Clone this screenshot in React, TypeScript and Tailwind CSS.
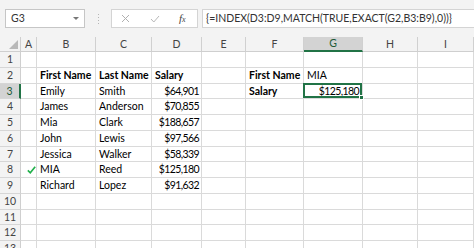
import React from "react";

const cols = ["A", "B", "C", "D", "E", "F", "G", "H", "I"];

type Cell = { text?: string; bold?: boolean; right?: boolean; check?: boolean };

const rows: Record<number, Record<string, Cell>> = {
  2: {
    B: { text: "First Name", bold: true },
    C: { text: "Last Name", bold: true },
    D: { text: "Salary", bold: true },
    F: { text: "First Name", bold: true },
    G: { text: "MIA" },
  },
  3: {
    B: { text: "Emily" },
    C: { text: "Smith" },
    D: { text: "$64,901", right: true },
    F: { text: "Salary", bold: true },
    G: { text: "$125,180", right: true },
  },
  4: { B: { text: "James" }, C: { text: "Anderson" }, D: { text: "$70,855", right: true } },
  5: { B: { text: "Mia" }, C: { text: "Clark" }, D: { text: "$188,657", right: true } },
  6: { B: { text: "John" }, C: { text: "Lewis" }, D: { text: "$97,566", right: true } },
  7: { B: { text: "Jessica" }, C: { text: "Walker" }, D: { text: "$58,339", right: true } },
  8: {
    A: { check: true },
    B: { text: "MIA" },
    C: { text: "Reed" },
    D: { text: "$125,180", right: true },
  },
  9: { B: { text: "Richard" }, C: { text: "Lopez" }, D: { text: "$91,632", right: true } },
};

function FormulaBar() {
  return (
    <div className="h-[37px] bg-[#f3f3f3] flex items-start pt-[9px] pl-[5px]">
      {/* name box */}
      <div className="w-[80px] h-[19px] bg-white border border-[#c6c6c6] flex items-center justify-between pl-[5px] pr-[5px] text-[#333]">
        <span>G3</span>
        <span className="w-0 h-0 border-l-[3px] border-r-[3px] border-t-[3px] border-l-transparent border-r-transparent border-t-[#777]" />
      </div>
      {/* grip */}
      <div className="w-[26px] h-[19px] flex flex-col items-center justify-center gap-[2px]">
        <span className="w-[1px] h-[1px] bg-[#b5b5b5]" />
        <span className="w-[1px] h-[1px] bg-[#b5b5b5]" />
        <span className="w-[1px] h-[1px] bg-[#b5b5b5]" />
        <span className="w-[1px] h-[1px] bg-[#b5b5b5]" />
      </div>
      {/* cancel / enter / fx */}
      <div className="w-[87px] h-[19px] bg-white border border-[#d4d4d4] flex items-center">
        <svg width="9" height="9" viewBox="0 0 9 9" className="ml-[9px]">
          <path d="M1 1L8 8M8 1L1 8" stroke="#b0b0b0" strokeWidth="1" fill="none" />
        </svg>
        <svg width="10" height="8" viewBox="0 0 10 8" className="ml-[20px]">
          <path d="M1 4L3.8 7L9 1" stroke="#b8b8b8" strokeWidth="1" fill="none" />
        </svg>
        <span className="ml-[19px] text-[#444] italic text-[11px] font-['Liberation_Serif',serif]">
          f<span className="text-[8px]">x</span>
        </span>
      </div>
      {/* formula */}
      <div className="ml-[4px] flex-1 h-[19px] bg-white border border-[#d4d4d4] border-r-0 flex items-center pl-[3px] text-[#333] whitespace-nowrap overflow-hidden">
        {"{=INDEX(D3:D9,MATCH(TRUE,EXACT(G2,B3:B9),0))}"}
      </div>
    </div>
  );
}

function GridCell({ cell, col, row }: { cell?: Cell; col: string; row: number }) {
  const selected = col === "G" && row === 3;
  return (
    <div
      className={`relative h-[15.75px] border-r border-b border-[#dadada] flex items-center whitespace-nowrap text-black ${
        cell?.right
          ? `justify-end tracking-[-0.6px] ${selected ? "pr-[3px]" : "pr-[2px]"}`
          : "pl-[3px]"
      } ${cell?.bold ? "font-bold" : ""}`}
    >
      {cell?.check && (
        <svg width="11" height="10" viewBox="0 0 11 10" className="ml-[3px]">
          <path d="M1 5.5L4 8.5L10 1" stroke="#21b04b" strokeWidth="2" fill="none" />
        </svg>
      )}
      {cell?.text && <span className="relative z-10">{cell.text}</span>}
      {selected && (
        <div className="absolute -left-[1px] -top-[1px] right-0 bottom-0 border-2 border-[#217346] z-20">
          <div className="absolute -right-[4px] -bottom-[4px] w-[5px] h-[5px] bg-[#217346] border border-white" />
        </div>
      )}
    </div>
  );
}

export default function App() {
  const rowNums = Array.from({ length: 13 }, (_, i) => i + 1);
  return (
    <div className="w-[474px] h-[248px] overflow-hidden bg-white font-['Lato',sans-serif] text-[10.5px] leading-none">
      <FormulaBar />
      <div className="grid grid-cols-[21px_16px_59px_56px_50px_44px_58px_59px_55px_1fr]">
        {/* corner */}
        <div className="relative h-[15px] bg-[#f3f3f3] border-r border-b border-[#cfcfcf]">
          <svg width="9" height="9" viewBox="0 0 9 9" className="absolute right-[2px] bottom-[2px]">
            <path d="M9 0L9 9L0 9Z" fill="#b9b9b9" />
          </svg>
        </div>
        {cols.map((c) => (
          <div
            key={c}
            className={`h-[15px] flex items-center justify-center border-r border-[#d0d0d0] ${
              c === "G"
                ? "bg-[#d3d3d3] border-b-2 border-b-[#217346] text-[#1e5a37]"
                : "bg-[#f3f3f3] border-b border-b-[#cfcfcf] text-[#444]"
            }`}
          >
            {c}
          </div>
        ))}

        {rowNums.map((r) => (
          <React.Fragment key={r}>
            <div
              className={`h-[15.75px] flex items-center justify-center border-b border-[#d6d6d6] ${
                r === 3
                  ? "bg-[#d3d3d3] border-r-2 border-r-[#217346] text-[#1e5a37]"
                  : "bg-[#f3f3f3] border-r border-r-[#cfcfcf] text-[#444]"
              }`}
            >
              {r}
            </div>
            {cols.map((c) => (
              <GridCell key={c} col={c} row={r} cell={rows[r]?.[c]} />
            ))}
          </React.Fragment>
        ))}
      </div>
    </div>
  );
}
